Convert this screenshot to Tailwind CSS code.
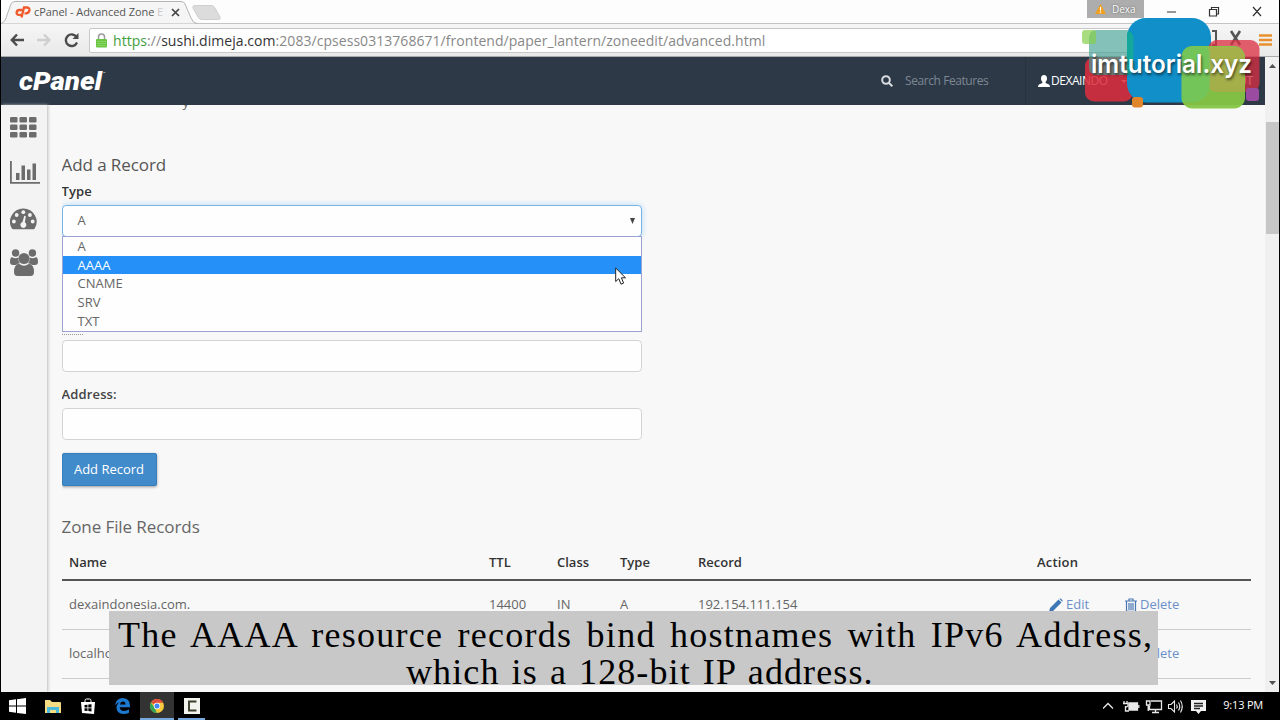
<!DOCTYPE html>
<html lang="en">
  <head>
    <meta charset="UTF-8" />
    <meta name="viewport" content="width=device-width, initial-scale=1.0" />
    <title>cPanel - Advanced Zone Editor</title>
    <script src="https://cdn.jsdelivr.net/npm/@tailwindcss/browser@4"></script>
  </head>
  <body class="bg-black">
    <div class="relative w-[1280px] h-[720px] overflow-hidden flex flex-col bg-black font-['Open_Sans',sans-serif] text-[13px] text-[#666]">
      <!-- browser window -->
      <div class="h-[692px] ml-px mr-px flex flex-col bg-[#f8f8f8] overflow-hidden">
        <!-- tab strip -->
        <div class="h-6 shrink-0 flex bg-[#fdfdfd] border-b border-[#c4c4c4]">
          <div class="relative w-[222px] h-6">
            <svg class="absolute left-0 top-0" width="222" height="24" viewBox="0 0 222 24">
              <path d="M0 23.5C4 22 5 19 6 15L10 4Q11 1.500 14 1.500H180Q183 1.500 184 4L190 18Q192 23.500 196 23.500V24H0Z" fill="#f5f5f5" stroke="#b4b4b4" />
              <path d="M194 5.500H210Q213 5.500 214 8L219 17Q220 19.500 217 19.500H201Q198 19.500 197 17L192 8Q191 5.500 194 5.500Z" fill="#dcdcdc" stroke="#cfcfcf" />
            </svg>
            <div class="relative flex items-center h-6 pl-[14px]">
              <svg width="16" height="12" viewBox="0 0 16 12" fill="none" stroke="#f0592b" stroke-width="2.300">
                <path d="M7.500 4H4.500Q2 4 1.600 6.500Q1.400 8.800 4 8.800H6" />
                <path d="M6.500 11.500L9 1.500H12Q15 1.700 14.400 4.600Q13.800 7.300 11 7.300H9.500" />
              </svg>
              <span class="ml-[3px] w-[129px] whitespace-nowrap text-[11px] text-[#555] tracking-[-0.07px]">cPanel - Advanced Zone <span class="text-[#ccc]">E</span></span>
              <svg class="ml-[8px]" width="9" height="9" viewBox="0 0 9 9" stroke="#444" stroke-width="1.700"><path d="M1 1L8 8M8 1L1 8" /></svg>
            </div>
          </div>
          <div class="ml-auto flex">
            <div class="flex items-center gap-[6px] w-[57px] h-[18px] mr-[22px] pl-2 bg-[#adadad] text-[10px] text-white">
              <svg width="11" height="10" viewBox="0 0 11 10"><path d="M5.500 0L11 10H0Z" fill="#f0a020" /><path d="M5.500 3V6.500M5.500 7.500V9" stroke="#fff" stroke-width="1.200" /></svg>
              <span class="[text-shadow:0_0_2px_#555]">Dexa</span>
            </div>
            <svg width="113" height="24" viewBox="0 0 113 24" fill="none" stroke="#333" stroke-width="1.200">
              <path d="M1 12H10M43.500 9.500H50.500V16H43.500ZM45.500 9.500V7.500H52.500V14H50.500M87 7L95 16M95 7L87 16" />
            </svg>
          </div>
        </div>

        <!-- toolbar -->
        <div class="h-[33px] shrink-0 flex items-center pl-[9px] bg-gradient-to-b from-[#f6f6f6] to-[#e9e9e9] border-b border-[#aaa]">
          <svg width="70" height="20" viewBox="0 0 70 20" fill="none" stroke="#4b4b4b" stroke-width="2.400">
            <path d="M14 10H2M7 4.500L1.800 10L7 15.500" />
            <path d="M27 10H39M34 4.500L39.500 10L34 15.500" stroke="#cfcfcf" />
            <path d="M66.500 7A5.800 5.800 0 1 0 67 12.500" />
            <path d="M68.500 3V9H62.500Z" fill="#4b4b4b" stroke="none" />
          </svg>
          <div class="ml-[9px] w-[1111px] h-[25px] flex items-center pl-[6px] bg-white border border-[#c8c8c8] rounded-[2px]">
            <svg width="11" height="15" viewBox="0 0 11 15"><path d="M2.500 7V4Q2.500 1 5.500 1Q8.500 1 8.500 4V7" fill="none" stroke="#9b9b9b" stroke-width="1.500" /><rect y="6" width="11" height="8.500" rx="1" fill="#6cc644" /><path d="M1 8.500H10M1 10.500H10M1 12.500H10" stroke="#93dc70" stroke-width=".7" /></svg>
            <span class="ml-[6px] whitespace-nowrap text-[14px] text-[#888] tracking-[0.045px]"><span class="text-[#3f9e3c]">https</span>://<span class="text-[#333]">sushi.dimeja.com</span>:2083/cpsess0313768671/frontend/paper_lantern/zoneedit/advanced.html</span>
          </div>
          <svg class="ml-[6px]" width="68" height="20" viewBox="0 0 68 20" fill="none">
            <path d="M6 1H10V15H6" stroke="#555" stroke-width="2" />
            <path d="M25 1L34 15M34 1L25 15" stroke="#555" stroke-width="2.600" />
            <path d="M53 5.500H66M53 10H66M53 14.500H66" stroke="#e8902c" stroke-width="2.400" />
          </svg>
        </div>

        <div class="flex h-[635px]">
          <div class="w-[1264px] flex flex-col">
            <!-- cPanel header -->
            <header class="h-12 shrink-0 flex items-center bg-[#2d3947] text-white">
              <svg class="ml-[16px] font-['Roboto',sans-serif] font-black italic text-[25px]" width="92" height="30" viewBox="0 0 92 30" fill="#fff">
                <text x="2" y="24" textLength="83" lengthAdjust="spacingAndGlyphs">cPanel</text>
                <text x="86" y="9" class="text-[4px] font-normal not-italic">™</text>
              </svg>
              <svg class="ml-auto" width="12" height="12" viewBox="0 0 12 12" fill="none" stroke="#d8dce0" stroke-width="2"><circle cx="5" cy="5" r="3.800" /><path d="M7.800 7.800L11.300 11.300" /></svg>
              <span class="ml-[12px] w-[120px] text-[12px] tracking-[-0.42px] text-[#7d8793]">Search Features</span>
              <div class="h-12 w-[240px] flex items-center pl-3 border-l border-[#29333f]">
                <svg width="12" height="12" viewBox="0 0 12 12" fill="#fff"><path d="M6 0C8 0 9 1.500 9 3.500C9 5.300 8.300 6.200 7.600 7V8L11 9.500Q12 10 12 12H0Q0 10 1 9.500L4.400 8V7C3.700 6.200 3 5.300 3 3.500C3 1.500 4 0 6 0Z" /></svg>
                <span class="ml-px w-[57px] text-[12px] tracking-[-0.45px]">DEXAINDO</span>
                <svg class="ml-[13px]" width="6" height="3" viewBox="0 0 6 3"><path d="M0 0H6L3 3Z" fill="#fff" /></svg>
                <span class="ml-auto mr-3 text-[12px] tracking-[-0.2px]">LOGOUT</span>
              </div>
            </header>

            <div class="flex h-[587px]">
              <!-- sidebar -->
              <nav class="w-[46px] shrink-0 pl-[9px] pt-3 flex flex-col bg-[#f3f3f3] shadow-[1px_0_3px_#bbb] text-[#6c6c6c]">
                <svg width="27" height="21" viewBox="0 0 27 21" fill="currentColor">
                  <rect width="7.500" height="5.500" rx="1.200" /><rect x="9.500" width="7.500" height="5.500" rx="1.200" /><rect x="19" width="7.500" height="5.500" rx="1.200" />
                  <rect y="7.500" width="7.500" height="5.500" rx="1.200" /><rect x="9.500" y="7.500" width="7.500" height="5.500" rx="1.200" /><rect x="19" y="7.500" width="7.500" height="5.500" rx="1.200" />
                  <rect y="15" width="7.500" height="5.500" rx="1.200" /><rect x="9.500" y="15" width="7.500" height="5.500" rx="1.200" /><rect x="19" y="15" width="7.500" height="5.500" rx="1.200" />
                </svg>
                <svg class="mt-[23px]" width="30" height="23" viewBox="0 0 30 23" fill="currentColor">
                  <path d="M0 0H1.800V21H30V22.800H0ZM6 12H9.500V19H6ZM11.500 4.500H15V19H11.500ZM17 8.500H20.500V19H17ZM22.500 2.500H26V19H22.500Z" />
                </svg>
                <svg class="mt-[24px]" width="27" height="22" viewBox="0 0 27 22">
                  <path d="M13.300 0.500A13.200 13.200 0 0 1 24.700 20.500Q24.300 21.200 23.500 21.200H3.100Q2.300 21.200 1.900 20.500A13.200 13.200 0 0 1 13.300 0.500Z" fill="currentColor" />
                  <g fill="#f3f3f3"><circle cx="3.900" cy="13.500" r="1.900" /><circle cx="6.700" cy="7" r="1.900" /><circle cx="13.300" cy="4.200" r="1.900" /><circle cx="19.900" cy="7" r="1.900" /><circle cx="22.700" cy="13.500" r="1.900" /><path d="M14.300 7.800L15.800 8.200L14.900 14.300A3 3 0 1 1 12.500 14Z" /></g>
                </svg>
                <svg class="mt-[19px]" width="28" height="27" viewBox="0 0 28 27" fill="currentColor">
                  <circle cx="5.600" cy="4" r="3.700" /><circle cx="22.400" cy="4" r="3.700" />
                  <path d="M2 8.300Q5.500 10 8.300 8.500Q8 12 10 14.300Q7.500 14.500 6 16H3Q0 16 0 13Q0 8.500 2 8.300ZM26 8.300Q22.500 10 19.700 8.500Q20 12 18 14.300Q20.500 14.500 22 16H25Q28 16 28 13Q28 8.500 26 8.300Z" />
                  <circle cx="14" cy="9.500" r="5.500" />
                  <path d="M9 14.800Q14 18.500 19 14.800Q24 15.500 24 23Q24 27 20.500 27H7.500Q4 27 4 23Q4 15.500 9 14.800Z" />
                </svg>
              </nav>

              <!-- page content -->
              <main class="relative w-[1203px] ml-[14.500px] flex flex-col items-start overflow-hidden">
                <div class="h-[49px] pl-[121px] text-[13px] leading-[14px] -mt-[10px]">y</div>
                <h3 class="h-[26px] mt-[9px] leading-[23px] text-[17px] tracking-[-0.08px] text-[#555]">Add a Record</h3>
                <label class="h-[24px] leading-[24px] font-semibold text-[#333] tracking-[0.1px]">Type</label>
                <div class="mt-[2px] w-[580px] h-[32px] shrink-0 flex items-center justify-between pl-[15px] pr-[6px] bg-[#fefefe] border border-[#79b3e2] rounded-[4px] shadow-[0_0_6px_#b5dcf7]">
                  A
                  <svg width="5" height="6" viewBox="0 0 5 6"><path d="M0 0H5L2.500 6Z" fill="#444" /></svg>
                </div>
                <div class="mt-[103px] w-[580px] h-[32px] shrink-0 bg-[#fefefe] border border-[#d4d4d4] rounded-[4px]"></div>
                <label class="mt-[10px] h-[24px] leading-[24px] font-semibold text-[#444] tracking-[0.15px]">Address:</label>
                <div class="mt-[2px] w-[580px] h-[32px] shrink-0 bg-[#fefefe] border border-[#d4d4d4] rounded-[4px]"></div>
                <button class="mt-[13px] w-[95px] h-[33px] shrink-0 bg-[#428bca] border border-[#357ebd] rounded-[2px] text-white shadow-[0_1px_3px_#999]">Add Record</button>
                <h3 class="mt-[27px] h-[28px] leading-[28px] text-[17px] tracking-[-0.08px] text-[#666]">Zone File Records</h3>
                <table class="mt-[2px] w-[1189px] table-fixed text-left">
                  <thead>
                    <tr class="h-[37px] border-b-2 border-[#555] text-[#333] [&>th]:pl-[7.500px] [&>th]:pt-[3px] [&>th]:font-semibold">
                      <th class="w-[420px]">Name</th>
                      <th class="w-[68px]">TTL</th>
                      <th class="w-[63px]">Class</th>
                      <th class="w-[78px]">Type</th>
                      <th class="w-[339px]">Record</th>
                      <th class="tracking-[0.2px]">Action</th>
                    </tr>
                  </thead>
                  <tbody class="[&_td]:pl-[7.500px]">
                    <tr class="h-[49px] border-b border-[#ccc]">
                      <td>dexaindonesia.com.</td>
                      <td>14400</td>
                      <td>IN</td>
                      <td>A</td>
                      <td>192.154.111.154</td>
                      <td>
                        <div class="flex items-center pl-3 text-[#6b8fc9]">
                          <svg width="14" height="14" viewBox="0 0 14 14" fill="#3f76b5"><path d="M0 14L1 10L9.500 1.500L12.500 4.500L4 13ZM10.300 .8Q11 0 12 .8L13.300 2Q14 3 13.200 3.700Z" /></svg>
                          <span class="ml-[3px] w-[59px]">Edit</span>
                          <svg width="12" height="14" viewBox="0 0 12 14" fill="none" stroke="#4a78b5" stroke-width="1.200"><path d="M0 3H12M4 2.500V1H8V2.500M1.500 3V13.300H10.500V3M4 5V12M6 5V12M8 5V12" /></svg>
                          <span class="ml-[3px]">Delete</span>
                        </div>
                      </td>
                    </tr>
                    <tr class="h-[49px] border-b border-[#ccc]">
                      <td colspan="5">localhost</td>
                      <td><div class="pl-[103px] text-[#6b8fc9]">Delete</div></td>
                    </tr>
                  </tbody>
                </table>

                <!-- open select list -->
                <div class="absolute left-0 top-[131px] w-[580px] h-[96px] flex flex-col bg-[#fefefe] border border-[#9ba3d3] leading-[18.7px]">
                  <span class="pl-[15px]">A</span>
                  <span class="pl-[15px] bg-[#2490f8] text-white">AAAA</span>
                  <span class="pl-[15px]">CNAME</span>
                  <span class="pl-[15px]">SRV</span>
                  <span class="pl-[15px]">TXT</span>
                </div>
                <div class="absolute left-0 top-[229px] w-[21px] border-t border-dotted border-[#999]"></div>
              </main>
            </div>
          </div>

          <!-- scrollbar -->
          <div class="w-[14px] flex flex-col items-center bg-[#f0f0f0]">
            <svg class="mt-[7px]" width="7" height="4" viewBox="0 0 7 4"><path d="M0 4H7L3.500 0Z" fill="#505050" /></svg>
            <div class="mt-[54px] w-[13px] ml-px h-[112px] bg-[#c6c6c6]"></div>
            <svg class="mt-auto mb-[7px]" width="7" height="4" viewBox="0 0 7 4"><path d="M0 0H7L3.500 4Z" fill="#505050" /></svg>
          </div>
        </div>
      </div>

      <!-- taskbar -->
      <footer class="h-7 flex items-center bg-black text-white">
        <svg class="ml-[9px]" width="17" height="16" viewBox="0 0 17 16" fill="#fff"><path d="M0 2.300L7 1.300V7.600H0ZM8 1.200L17 0V7.600H8ZM0 8.500H7V14.800L0 13.800ZM8 8.500H17V16L8 14.900Z" /></svg>
        <svg class="ml-[19px]" width="17" height="15" viewBox="0 0 17 15"><path d="M0 1H5L7 3H15Q16 3 16 4V14H0Z" fill="#f3dc83" /><path d="M2 14V8H14V14H11V11H5V14Z" fill="#4bb9dc" /></svg>
        <svg class="ml-[19px]" width="14" height="16" viewBox="0 0 14 16"><path d="M4 4V2.500Q4 1 5.500 1H8.500Q10 1 10 2.500V4" fill="none" stroke="#fff" /><path d="M0 4H14L13 16L1 15Z" fill="#fff" /><path d="M3.500 7L6.500 6.700V9.500H3.500ZM7.300 6.600L10.500 6.300V9.500H7.300ZM3.500 10.200H6.500V13L3.500 12.700ZM7.300 10.200H10.500V13.500L7.300 13.100Z" fill="#000" /></svg>
        <svg class="ml-[20px]" width="15" height="16" viewBox="0 0 15 16"><path d="M0 7.500Q1 0 8 0Q15 .5 15 7.500V9.300H4.700Q5 13 9 13Q11.500 13 14 11.600V14.700Q11.500 16 8.500 16Q1.500 16 1.500 9.500Q1.700 6 5 4Q2 4.500 0 7.500ZM5 6.600H10.500Q10.500 3.600 8 3.600Q5.500 3.700 5 6.600Z" fill="#1d78d0" fill-rule="evenodd" /></svg>
        <div class="ml-[10px] w-[34px] h-7 flex items-center justify-center bg-[#333] border-b-2 border-[#76a9de]">
          <svg class="mt-[2px]" width="14" height="14" viewBox="0 0 14 14"><circle cx="7" cy="7" r="7" fill="#f8c93a" /><path d="M7 7L1 3.400A7 7 0 0 1 13.200 3.700H7Z" fill="#df4b3f" /><path d="M1 3.400L5 9.500L7 14A7 7 0 0 1 1 3.400Z" fill="#34a455" /><circle cx="7" cy="7" r="3.200" fill="#fff" /><circle cx="7" cy="7" r="2.500" fill="#4285f4" /></svg>
        </div>
        <div class="ml-[4px] w-[27px] h-7 flex items-center justify-center border-b-2 border-[#76a9de]">
          <svg class="mt-[2px]" width="16" height="16" viewBox="0 0 16 16"><rect width="16" height="16" fill="#f4f4ee" /><path d="M11.500 4.500V3.500H5V12.500H11.500V11.500" fill="none" stroke="#3c3f2a" stroke-width="1.900" /></svg>
        </div>
        <svg class="ml-auto" width="104" height="18" viewBox="0 0 104 18" fill="none" stroke="#e8e8e8" stroke-width="1.300">
          <path d="M0 11.500L5 6.500L10 11.500" />
          <path d="M21 4V6M24 4V6M20 6.500H25V9Q22.500 11 22.500 9V14H26" /><path d="M26 6H34.500V13H26Z" fill="#e8e8e8" /><path d="M35.800 8V11" />
          <path d="M48 4H58.500V12.500H46.500V9M43.500 4H47V8H43.500ZM45.200 8V14M52.500 12.500V15M49 15.500H56" />
          <path d="M65.500 7.500H68L71.500 4V15L68 11.500H65.500ZM73.500 7.500Q75 9.500 73.500 11.500M75.500 5.500Q78 9.500 75.500 13.500M77.500 3.500Q81 9.500 77.500 15.500" stroke-width="1.100" />
          <path d="M88 3H103V14H98L95.500 17L93 14H88Z" fill="#f2f2f2" stroke="none" /><path d="M91 6.500H100M91 9H100M91 11.500H97" stroke="#222" />
        </svg>
        <span class="ml-[16px] mr-[17px] -mt-[2px] text-[11px] tracking-[-0.2px] whitespace-nowrap">9:13 PM</span>
      </footer>

      <!-- mouse pointer -->
      <svg class="absolute left-[615px] top-[267px]" width="12" height="19" viewBox="0 0 12 19"><path d="M.7 1V14.500L3.800 11.700L6 17.200L8.600 16.100L6.400 10.800H10.500Z" fill="#fff" stroke="#222" /></svg>

      <!-- channel logo -->
      <svg class="absolute left-[1080px] top-[14px] font-['Inter',sans-serif] font-semibold text-[25px]" width="184" height="98" viewBox="1080 14 184 98">
        <rect x="1085" y="57" width="48" height="44.500" rx="9" fill="#de2c3c" fill-opacity=".86" />
        <rect x="1089" y="30" width="45" height="45" rx="7" fill="#45a394" fill-opacity=".66" />
        <rect x="1082" y="30" width="14" height="14" rx="3" fill="#86cf4c" fill-opacity=".7" />
        <rect x="1127" y="18" width="84" height="84.500" rx="19" fill="#118fc9" />
        <path d="M1127 34Q1128 31 1129 31Q1133 33 1133.500 38V68Q1133 74 1127 75Z" fill="#14a89c" />
        <rect x="1208" y="40" width="51.500" height="52" rx="9" fill="#dc2f43" fill-opacity=".76" />
        <rect x="1181.500" y="46" width="63.500" height="62.500" rx="11" fill="#85c645" fill-opacity=".95" />
        <path d="M1208 47H1234Q1244 47 1244 57V92H1217Q1208 92 1208 82Z" fill="#b3a74f" fill-opacity=".65" />
        <path d="M1182 57Q1182 46.500 1193 46.500H1207Q1210 50 1210 56V84Q1208 99 1196 102H1182Z" fill="#72c65c" fill-opacity=".8" />
        <rect x="1132" y="97" width="11" height="10.500" rx="3" fill="#df852c" />
        <rect x="1246" y="88" width="13" height="13" rx="3" fill="#9b4ca0" />
        <text x="1091" y="73" textLength="161" lengthAdjust="spacingAndGlyphs" fill="#fff" class="[text-shadow:1px_2px_3px_#0009]">imtutorial.xyz</text>
      </svg>

      <!-- subtitle -->
      <div class="absolute left-[109px] top-[611px] w-[1049px] h-[74px] flex flex-col items-start bg-[#c8c8c8] font-['Liberation_Serif',serif] text-[36px] leading-[37px] text-black whitespace-nowrap pt-[6px]">
        <span class="ml-[9px] tracking-[1.260px] [word-spacing:4px]">The AAAA resource records bind hostnames with IPv6 Address,</span>
        <span class="ml-[297px] tracking-[1.100px] [word-spacing:2px]">which is a 128-bit IP address.</span>
      </div>
    </div>
  </body>
</html>
